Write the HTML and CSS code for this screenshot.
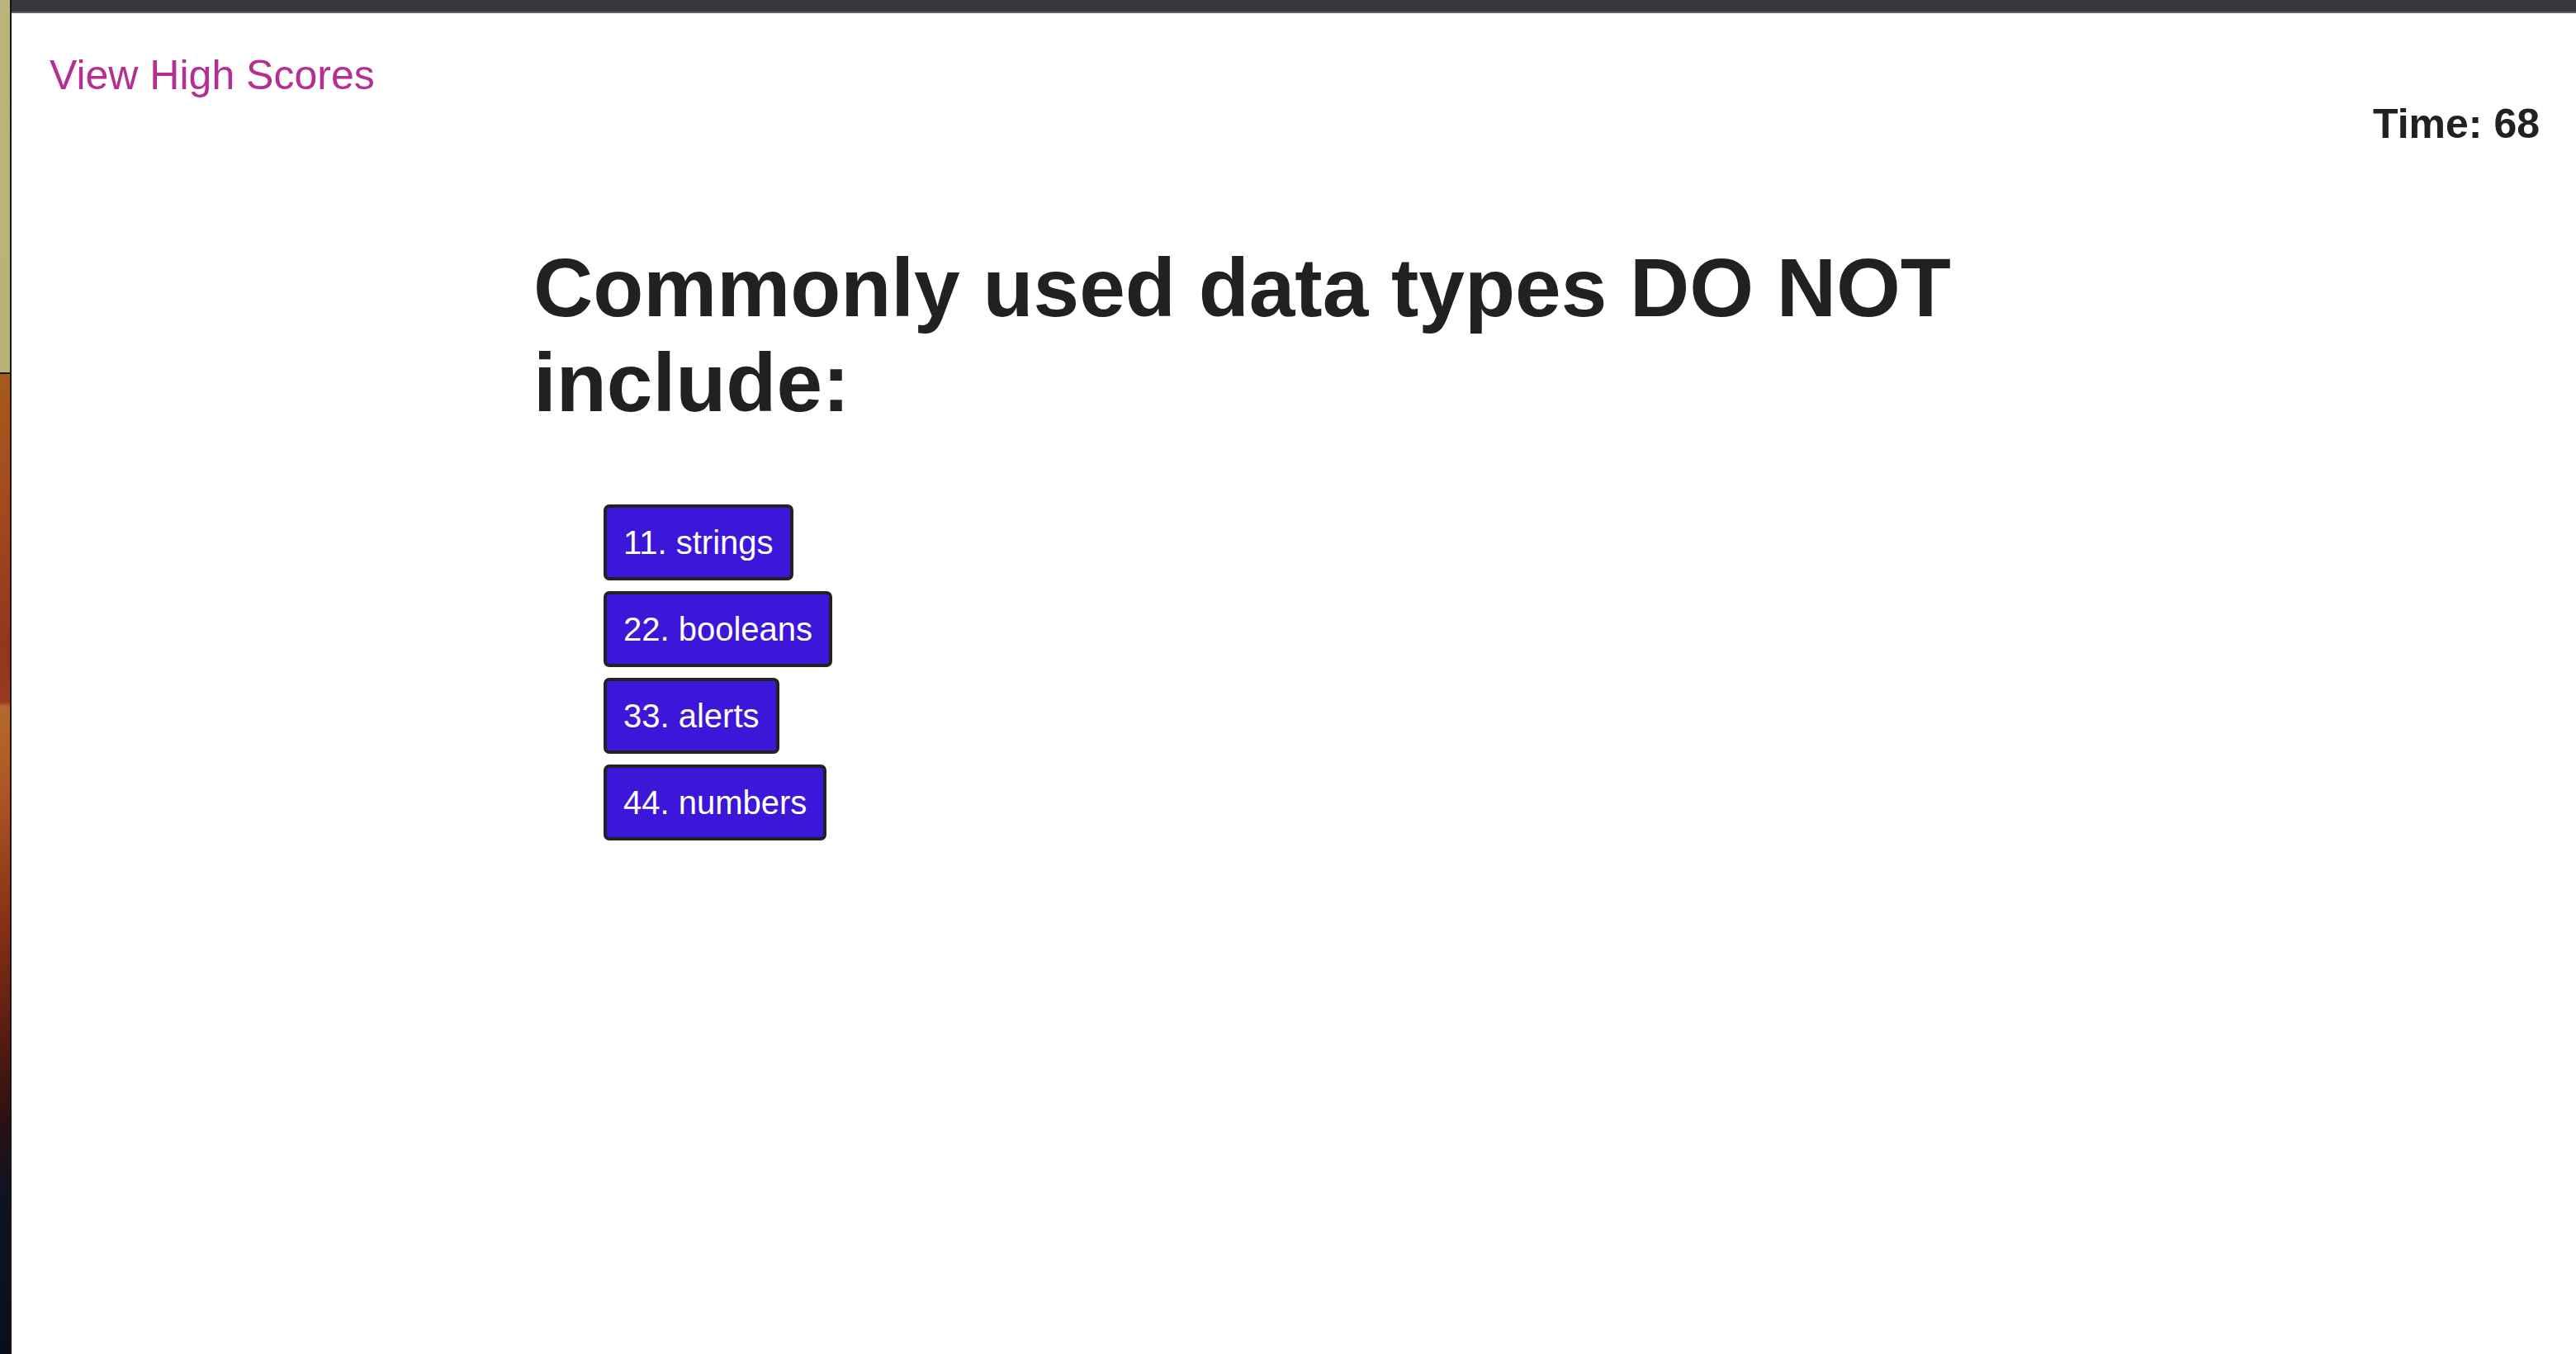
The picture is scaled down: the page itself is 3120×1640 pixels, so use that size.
FILE: index.html
```html
<!DOCTYPE html>
<html lang="en">
<head>
<meta charset="utf-8">
<title>Code Quiz</title>
<link rel="stylesheet" href="styles.css">
</head>
<body>
<div class="desktop">
  <div class="wallpaper"></div>
  <div class="window">
    <div class="titlebar"></div>
    <header class="top">
      <a class="scores" href="#">View High Scores</a>
      <div class="timer">Time: 68</div>
    </header>
    <main class="quiz">
      <h1 class="question">Commonly used data types DO NOT include:</h1>
      <ol class="choices">
        <li><button class="choice">11. strings</button></li>
        <li><button class="choice">22. booleans</button></li>
        <li><button class="choice">33. alerts</button></li>
        <li><button class="choice">44. numbers</button></li>
      </ol>
    </main>
  </div>
</div>
</body>
</html>
```
FILE: styles.css
```css
html, body {
  margin: 0;
  padding: 0;
  background: #ffffff;
}

.desktop {
  display: flex;
  height: 100vh;
  overflow: hidden;
}

.wallpaper {
  width: 12px;
  flex: none;
  border-right: 2px solid #141414;
  background: linear-gradient(to bottom,
    #bcb57b 0,
    #b8b279 451px,
    #1d1a14 451px,
    #1d1a14 453px,
    #a55a1e 453px,
    #a44b1d 600px,
    #93361f 780px,
    #98391f 850px,
    #b46a2c 856px,
    #ad5524 960px,
    #8c3416 1100px,
    #5a1c10 1250px,
    #2a1014 1360px,
    #0c1420 1450px,
    #07101a 100%);
}

.window {
  flex: 1;
  display: flex;
  flex-direction: column;
  background: #ffffff;
  font-family: "Liberation Sans", Arial, sans-serif;
  color: #212121;
}

.titlebar {
  height: 14px;
  background: #36373b;
  border-bottom: 2px solid #616266;
  flex: none;
}

.top {
  display: flex;
  justify-content: space-between;
  align-items: flex-start;
  padding: 0 44px 0 46px;
}

.scores {
  margin-top: 47px;
  font-size: 50px;
  line-height: 57px;
  color: #b52f91;
  text-decoration: none;
}

.timer {
  margin-top: 106px;
  font-size: 50px;
  line-height: 57px;
  font-weight: bold;
  color: #212121;
}

.quiz {
  width: 1820px;
  padding-left: 632px;
}

.question {
  margin: 112px 0 0 0;
  font-size: 100px;
  line-height: 115px;
  font-weight: bold;
  color: #212121;
}

.choices {
  list-style: none;
  margin: 90px 0 0 0;
  padding: 0 0 0 85px;
  display: flex;
  flex-direction: column;
  align-items: flex-start;
  gap: 13px;
}

.choice {
  font-family: "Liberation Sans", Arial, sans-serif;
  font-size: 40px;
  line-height: 46px;
  color: #ffffff;
  background: #3c17d9;
  border: 4px solid #222222;
  border-radius: 7px;
  padding: 19px 20px;
  margin: 0;
  cursor: pointer;
}
```
